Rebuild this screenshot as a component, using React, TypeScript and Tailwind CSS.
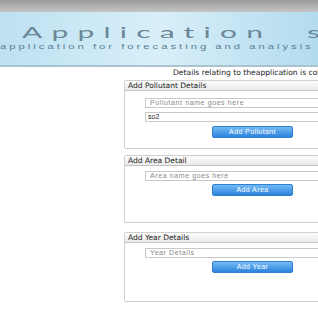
import React from "react";

const dv = { fontFamily: '"DejaVu Sans", Verdana, sans-serif' };

function Panel({ title, height, children }: { title: string; height: string; children: React.ReactNode }) {
  return (
    <div className={`flex flex-col w-[260px] ${height} border border-[#cfcfcf] rounded-[2px] bg-white`}>
      <div
        className="h-[10px] shrink-0 border-b border-[#c4c4c4] bg-gradient-to-b from-[#fdfdfd] to-[#e9e9e9] pl-[3px] text-[7.5px] leading-[9px] text-[#222] rounded-t-[2px] whitespace-nowrap"
        style={dv}
      >
        {title}
      </div>
      <div className="flex flex-col pl-[20px]">{children}</div>
    </div>
  );
}

function Input({ text, placeholder }: { text: string; placeholder?: boolean }) {
  return (
    <div
      className={`h-[10px] w-[240px] border border-[#c8c8c8] bg-white text-[7px] leading-[8px] whitespace-nowrap ${
        placeholder ? "text-[#8a8a8a] tracking-[0.6px] pl-[4px]" : "text-[#222] pl-[2px]"
      }`}
    >
      {text}
    </div>
  );
}

function Button({ label }: { label: string }) {
  return (
    <div className="ml-[67px] h-[12px] w-[81px] rounded-[2px] border border-[#2f80d0] bg-gradient-to-b from-[#73b9f5] to-[#2a84dc] text-center text-[7px] leading-[10px] text-white tracking-[0.4px] whitespace-nowrap">
      {label}
    </div>
  );
}

export default function App() {
  return (
    <div className="w-[318px] h-[318px] overflow-hidden bg-white" style={{ fontFamily: '"Liberation Sans", Arial, sans-serif' }}>
      <div className="h-[12px] bg-gradient-to-b from-[#9c9c9c] to-[#c4c4c4]" />
      <div className="relative h-[53px] overflow-hidden bg-gradient-to-r from-[#bde1f1] via-[#d8eff9] to-[#b3dbee]">
        <div
          className="absolute left-[22px] top-[13px] origin-left scale-x-[2] whitespace-nowrap text-[15px] font-normal leading-[15px] tracking-[4.6px] [word-spacing:9px] text-[#6c8797]"
          style={{ fontFamily: "Lato, sans-serif" }}
        >
          Application system
        </div>
        <div className="absolute left-[0px] top-[30px] origin-left scale-x-[1.5] whitespace-nowrap text-[7.5px] leading-[10px] tracking-[2px] text-[#5a8093]">
          application for forecasting and analysis of pollution
        </div>
      </div>
      <div className="h-[2px] bg-[#a9c3cf]" />
      <div className="h-[13px] pl-[173px] pt-[1px] whitespace-nowrap text-[7.6px] leading-[9px] text-[#222]" style={dv}>
        Details relating to theapplication is collected here
      </div>
      <div className="flex flex-col pl-[124px]">
        <Panel title="Add Pollutant Details" height="h-[69px]">
          <div className="h-[7px]" />
          <Input text="Pollutant name goes here" placeholder />
          <div className="h-[4px]" />
          <Input text="so2" />
          <div className="h-[4px]" />
          <Button label="Add Pollutant" />
        </Panel>
        <div className="h-[6px]" />
        <Panel title="Add Area Detail" height="h-[68px]">
          <div className="h-[5px]" />
          <Input text="Area name goes here" placeholder />
          <div className="h-[3px]" />
          <Button label="Add Area" />
        </Panel>
        <div className="h-[9px]" />
        <Panel title="Add Year Details" height="h-[70px]">
          <div className="h-[5px]" />
          <Input text="Year Details" placeholder />
          <div className="h-[3px]" />
          <Button label="Add Year" />
        </Panel>
      </div>
    </div>
  );
}
